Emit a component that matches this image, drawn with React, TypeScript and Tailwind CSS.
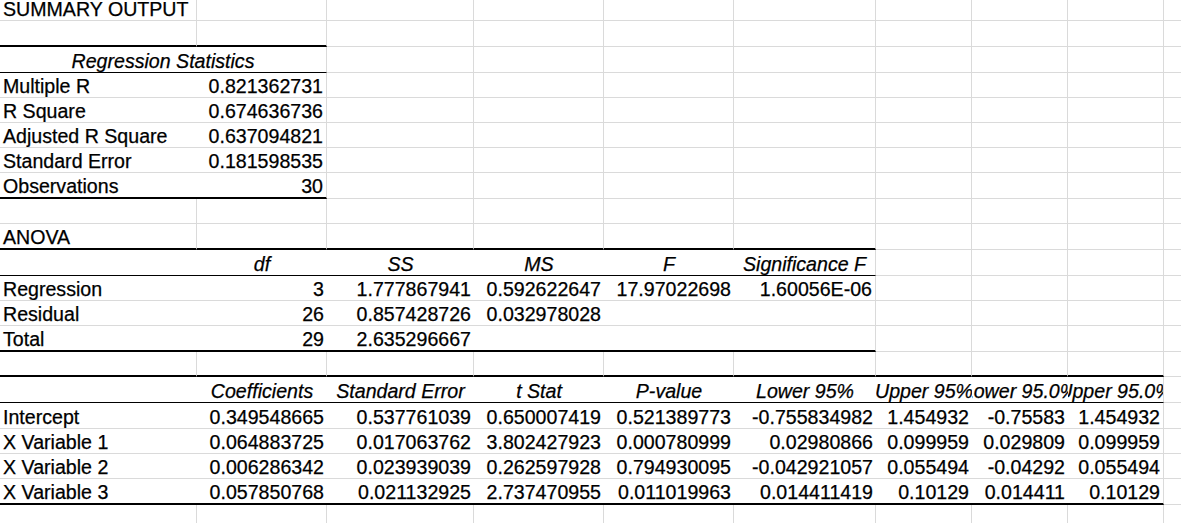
import React from "react";

type Edge = "grid" | "thin" | "thick";

interface Cell {
  text?: string;
  align?: "left" | "right" | "center";
  italic?: boolean;
  wide?: boolean;
  // cells inside an output table lose their vertical gridline
  inside?: boolean;
  edge?: Edge;
}

const COLUMN_COUNT = 10;

const stats = [
  ["Multiple R", "0.821362731"],
  ["R Square", "0.674636736"],
  ["Adjusted R Square", "0.637094821"],
  ["Standard Error", "0.181598535"],
  ["Observations", "30"],
];

const anovaHead = ["", "df", "SS", "MS", "F", "Significance F"];
const anovaRows = [
  ["Regression", "3", "1.777867941", "0.592622647", "17.97022698", "1.60056E-06"],
  ["Residual", "26", "0.857428726", "0.032978028", "", ""],
  ["Total", "29", "2.635296667", "", "", ""],
];

const coefHead = [
  "",
  "Coefficients",
  "Standard Error",
  "t Stat",
  "P-value",
  "Lower 95%",
  "Upper 95%",
  "Lower 95.0%",
  "Upper 95.0%",
];
const coefRows = [
  ["Intercept", "0.349548665", "0.537761039", "0.650007419", "0.521389773", "-0.755834982", "1.454932", "-0.75583", "1.454932"],
  ["X Variable 1", "0.064883725", "0.017063762", "3.802427923", "0.000780999", "0.02980866", "0.099959", "0.029809", "0.099959"],
  ["X Variable 2", "0.006286342", "0.023939039", "0.262597928", "0.794930095", "-0.042921057", "0.055494", "-0.04292", "0.055494"],
  ["X Variable 3", "0.057850768", "0.021132925", "2.737470955", "0.011019963", "0.014411419", "0.10129", "0.014411", "0.10129"],
];

// fill a row out to the full sheet width with empty cells
const pad = (cells: Cell[]): Cell[] => {
  const used = cells.reduce((n, c) => n + (c.wide ? 2 : 1), 0);
  return [...cells, ...Array.from({ length: COLUMN_COUNT - used }, () => ({}))];
};

const buildRows = (): Cell[][] => {
  const rows: Cell[][] = [];

  rows.push(pad([{ text: "SUMMARY OUTPUT" }]));
  rows.push(pad([{ edge: "thick" }, { edge: "thick" }]));
  rows.push(pad([{ text: "Regression Statistics", italic: true, align: "center", wide: true, edge: "thin" }]));
  stats.forEach(([label, value], i) => {
    const edge: Edge = i === stats.length - 1 ? "thick" : "grid";
    rows.push(pad([{ text: label, inside: true, edge }, { text: value, align: "right", edge }]));
  });
  rows.push(pad([]));

  rows.push(pad([{ text: "ANOVA", edge: "thick" }, ...Array.from({ length: 5 }, () => ({ edge: "thick" as Edge }))]));
  rows.push(pad(anovaHead.map((text, j) => ({ text, italic: true, align: "center", inside: j < 5, edge: "thin" }))));
  anovaRows.forEach((r, i) => {
    const edge: Edge = i === anovaRows.length - 1 ? "thick" : "grid";
    rows.push(pad(r.map((text, j) => ({ text, align: j === 0 ? "left" : "right", inside: j < 5, edge }))));
  });
  rows.push(pad(Array.from({ length: 9 }, () => ({ edge: "thick" as Edge }))));

  rows.push(pad(coefHead.map((text, j) => ({ text, italic: true, align: "center", inside: j < 8, edge: "thin" }))));
  coefRows.forEach((r, i) => {
    const edge: Edge = i === coefRows.length - 1 ? "thick" : "grid";
    rows.push(pad(r.map((text, j) => ({ text, align: j === 0 ? "left" : "right", inside: j < 8, edge }))));
  });
  rows.push(pad([]));

  return rows;
};

const edgeClass: Record<Edge, string> = {
  grid: "border-b border-b-[#dadada]",
  thin: "border-b border-b-black",
  thick: "border-b-2 border-b-black",
};

const alignClass = {
  left: "justify-start",
  right: "justify-end",
  center: "justify-center",
};

const App = () => {
  const rows = buildRows();

  return (
    <div className="w-[1181px] h-[523px] overflow-hidden bg-white text-black font-['Liberation_Sans',Arial,sans-serif] text-[19.6px] [-webkit-text-stroke:0.25px_black]">
      <div className="grid grid-cols-[197px_130px_147px_130px_130px_142px_96px_96px_96px_1fr] grid-rows-[21px_26px_26px_25px_25px_25px_25px_26px_25px_26px_26px_25px_25px_26px_25px_26px_26px_25px_25px_26px_25px]">
        {rows.map((cells, r) =>
          cells.map((cell, c) => {
            const last = c === cells.length - 1;
            return (
              <div
                key={`${r}-${c}`}
                className={`flex items-end overflow-hidden whitespace-nowrap px-[3px] pb-[2px] leading-[18px] ${
                  alignClass[cell.align ?? "left"]
                } ${edgeClass[cell.edge ?? "grid"]} ${
                  cell.inside || last ? "" : "border-r border-r-[#dadada]"
                } ${cell.wide ? "col-span-2" : ""} ${cell.italic ? "italic" : ""}`}
              >
                {cell.text}
              </div>
            );
          })
        )}
      </div>
    </div>
  );
};

export default App;
